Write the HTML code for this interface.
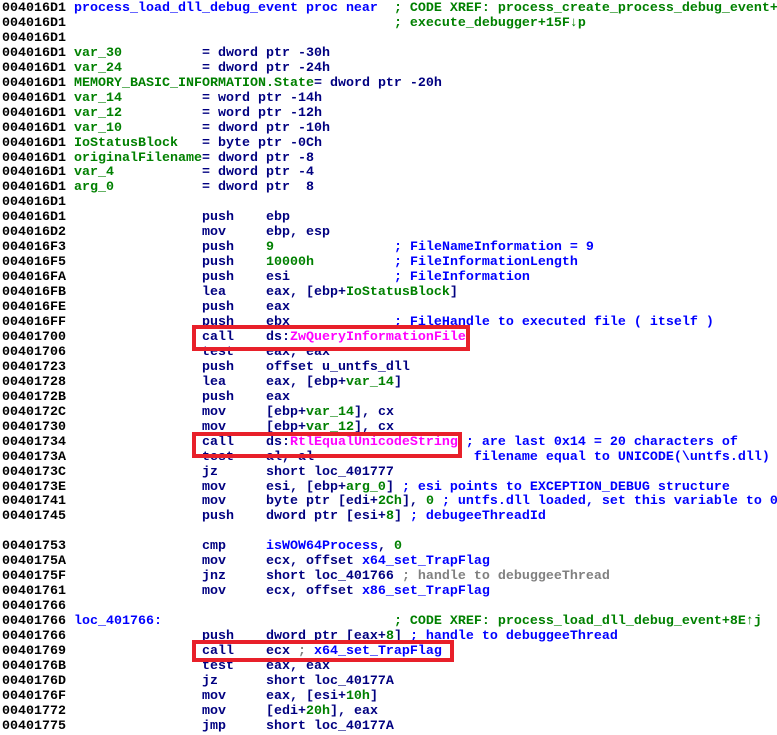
<!DOCTYPE html>
<html><head><meta charset="utf-8"><style>
html,body{margin:0;padding:0;background:#fff;width:777px;height:734px;overflow:hidden}
pre{margin:0;position:absolute;left:2px;top:2px;font-family:"Liberation Mono","DejaVu Sans Mono",monospace;font-weight:bold;font-size:13.333px;line-height:14.95px;color:#000080;white-space:pre}
.a{color:#000}.b{color:#0000ff}.g{color:#008000}.m{color:#ff00ff}.k{color:#808080}
.box{position:absolute;border:4px solid #e8202a;box-sizing:border-box}
</style></head><body>
<pre><span class="a">004016D1</span> <span class="b">process_load_dll_debug_event proc near</span>  <span class="g">; CODE XREF: process_create_process_debug_event+9</span>
<span class="a">004016D1</span>                                         <span class="g">; execute_debugger+15F↓p</span>
<span class="a">004016D1</span>
<span class="a">004016D1</span> <span class="g">var_30</span>          = dword ptr -30h
<span class="a">004016D1</span> <span class="g">var_24</span>          = dword ptr -24h
<span class="a">004016D1</span> <span class="g">MEMORY_BASIC_INFORMATION.State</span>= dword ptr -20h
<span class="a">004016D1</span> <span class="g">var_14</span>          = word ptr -14h
<span class="a">004016D1</span> <span class="g">var_12</span>          = word ptr -12h
<span class="a">004016D1</span> <span class="g">var_10</span>          = dword ptr -10h
<span class="a">004016D1</span> <span class="g">IoStatusBlock</span>   = byte ptr -0Ch
<span class="a">004016D1</span> <span class="g">originalFilename</span>= dword ptr -8
<span class="a">004016D1</span> <span class="g">var_4</span>           = dword ptr -4
<span class="a">004016D1</span> <span class="g">arg_0</span>           = dword ptr  8
<span class="a">004016D1</span>
<span class="a">004016D1</span>                 push    ebp
<span class="a">004016D2</span>                 mov     ebp, esp
<span class="a">004016F3</span>                 push    <span class="g">9</span>               <span class="b">; FileNameInformation = 9</span>
<span class="a">004016F5</span>                 push    <span class="g">10000h</span>          <span class="b">; FileInformationLength</span>
<span class="a">004016FA</span>                 push    esi             <span class="b">; FileInformation</span>
<span class="a">004016FB</span>                 lea     eax, [ebp+<span class="g">IoStatusBlock</span>]
<span class="a">004016FE</span>                 push    eax
<span class="a">004016FF</span>                 push    ebx             <span class="b">; FileHandle to executed file ( itself )</span>
<span class="a">00401700</span>                 call    ds:<span class="m">ZwQueryInformationFile</span>
<span class="a">00401706</span>                 test    eax, eax
<span class="a">00401723</span>                 push    offset u_untfs_dll
<span class="a">00401728</span>                 lea     eax, [ebp+<span class="g">var_14</span>]
<span class="a">0040172B</span>                 push    eax
<span class="a">0040172C</span>                 mov     [ebp+<span class="g">var_14</span>], cx
<span class="a">00401730</span>                 mov     [ebp+<span class="g">var_12</span>], cx
<span class="a">00401734</span>                 call    ds:<span class="m">RtlEqualUnicodeString</span> <span class="b">; are last 0x14 = 20 characters of</span>
<span class="a">0040173A</span>                 test    al, al                    <span class="b">filename equal to UNICODE(\untfs.dll)</span>
<span class="a">0040173C</span>                 jz      short loc_401777
<span class="a">0040173E</span>                 mov     esi, [ebp+<span class="g">arg_0</span>] <span class="b">; esi points to EXCEPTION_DEBUG structure</span>
<span class="a">00401741</span>                 mov     byte ptr [edi+<span class="g">2Ch</span>], <span class="g">0</span> <span class="b">; untfs.dll loaded, set this variable to 0</span>
<span class="a">00401745</span>                 push    dword ptr [esi+<span class="g">8</span>] <span class="b">; debugeeThreadId</span>

<span class="a">00401753</span>                 cmp     <span class="b">isWOW64Process</span>, <span class="g">0</span>
<span class="a">0040175A</span>                 mov     ecx, offset <span class="b">x64_set_TrapFlag</span>
<span class="a">0040175F</span>                 jnz     short loc_401766 <span class="k">; handle to debuggeeThread</span>
<span class="a">00401761</span>                 mov     ecx, offset <span class="b">x86_set_TrapFlag</span>
<span class="a">00401766</span>
<span class="a">00401766</span> <span class="b">loc_401766:</span>                             <span class="g">; CODE XREF: process_load_dll_debug_event+8E↑j</span>
<span class="a">00401766</span>                 push    dword ptr [eax+<span class="g">8</span>] <span class="b">; handle to debuggeeThread</span>
<span class="a">00401769</span>                 call    ecx <span class="k">;</span> <span class="b">x64_set_TrapFlag</span>
<span class="a">0040176B</span>                 test    eax, eax
<span class="a">0040176D</span>                 jz      short loc_40177A
<span class="a">0040176F</span>                 mov     eax, [esi+<span class="g">10h</span>]
<span class="a">00401772</span>                 mov     [edi+<span class="g">20h</span>], eax
<span class="a">00401775</span>                 jmp     short loc_40177A
</pre>
<div class="box" style="left:192px;top:325px;width:278px;height:26px"></div>
<div class="box" style="left:192px;top:432px;width:270px;height:26px"></div>
<div class="box" style="left:192px;top:640px;width:262px;height:22px"></div>
</body></html>
